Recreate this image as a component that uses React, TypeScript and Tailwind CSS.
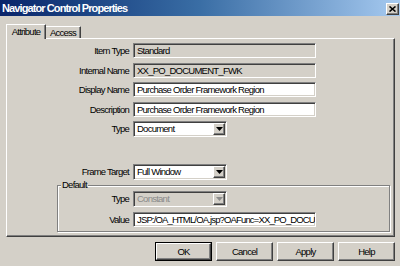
import React from 'react';

const FONT = "font-['Liberation_Sans',Arial,sans-serif]";

const sunken = 'border-t border-l border-t-[#808080] border-l-[#808080] border-r border-b border-r-white border-b-white shadow-[inset_1px_1px_0_#404040,inset_-1px_-1px_0_#d4d0c8]';
const raised = 'border-t border-l border-t-white border-l-white border-r border-b border-r-[#404040] border-b-[#404040] shadow-[inset_-1px_-1px_0_#808080]';

function TextField({ value, disabled, tight }: { value: string; disabled?: boolean; tight?: boolean }) {
  return (
    <div className={`w-[183px] h-[15px] ${sunken} ${disabled ? 'bg-[#d4d0c8]' : 'bg-white'} flex items-center pl-[3px] overflow-hidden whitespace-nowrap leading-none ${tight ? 'tracking-[-0.85px]' : ''}`}>
      {value}
    </div>
  );
}

function Combo({ value, disabled }: { value: string; disabled?: boolean }) {
  return (
    <div className={`w-[94px] h-[16px] ${sunken} ${disabled ? 'bg-[#d4d0c8] text-[#8a8a8a]' : 'bg-white'} flex items-stretch p-[1px]`}>
      <div className="flex-1 flex items-center pl-[2px] leading-none whitespace-nowrap overflow-hidden">{value}</div>
      <div className={`w-[12px] bg-[#d4d0c8] ${raised} flex items-center justify-center`}>
        <svg width="7" height="4" viewBox="0 0 7 4">
          <path d="M0 0h7L3.5 4z" fill={disabled ? '#8a8a8a' : '#000'} />
        </svg>
      </div>
    </div>
  );
}

function Row({ label, labelWidth, className = '', children }: { label: string; labelWidth: string; className?: string; children: React.ReactNode }) {
  return (
    <div className={`flex items-center gap-[4px] ${className}`}>
      <div className={`${labelWidth} text-right leading-none whitespace-nowrap`}>{label}</div>
      {children}
    </div>
  );
}

function Button({ label, isDefault }: { label: string; isDefault?: boolean }) {
  return (
    <div className={`w-[57px] h-[19px] ${isDefault ? 'border border-black' : ''}`}>
      <div className={`w-full h-full bg-[#d4d0c8] ${raised} flex items-center justify-center leading-none`}>{label}</div>
    </div>
  );
}

export default function App() {
  return (
    <div className={`w-[400px] h-[266px] bg-[#d4d0c8] ${FONT} text-[9.5px] tracking-[-0.75px] text-black overflow-hidden flex flex-col`}>
      {/* title bar */}
      <div className="h-[16px] shrink-0 flex items-center pl-[2px] pr-[1px] bg-gradient-to-r from-[#0a246a] via-[#3a6ea5] to-[#a6caf0]">
        <span className="text-white font-bold text-[11px] tracking-[-0.9px] leading-none">Navigator Control Properties</span>
        <div className={`ml-auto mt-[2px] w-[13px] h-[12px] bg-[#d4d0c8] ${raised} flex items-center justify-center`}>
          <svg width="7" height="6" viewBox="0 0 7 6">
            <path d="M0.5 0.5L6.5 5.5M6.5 0.5L0.5 5.5" stroke="#000" strokeWidth="1.6" />
          </svg>
        </div>
      </div>

      {/* tabs */}
      <div className="flex items-end pl-[6px] pt-[7px] h-[22px] shrink-0">
        <div className="relative z-10 w-[40px] h-[15px] -mb-[1px] bg-[#d4d0c8] border-t border-l border-t-white border-l-white border-r border-r-[#404040] shadow-[inset_-1px_0_0_#808080] flex items-start justify-center pt-[2px] leading-none">
          Attribute
        </div>
        <div className="w-[35px] h-[12px] bg-[#d4d0c8] border-t border-t-white border-r border-r-[#404040] shadow-[inset_-1px_0_0_#808080] flex items-start justify-center pt-[1px] leading-none">
          Access
        </div>
      </div>

      {/* tab panel */}
      <div className={`ml-[6px] w-[389px] h-[199px] shrink-0 ${raised} flex flex-col`}>
        <Row label="Item Type" labelWidth="w-[122px]" className="mt-[4px]">
          <TextField value="Standard" disabled />
        </Row>
        <Row label="Internal Name" labelWidth="w-[122px]" className="mt-[5px]">
          <TextField value="XX_PO_DOCUMENT_FWK" disabled />
        </Row>
        <Row label="Display Name" labelWidth="w-[122px]" className="mt-[4px]">
          <TextField value="Purchase Order Framework Region" />
        </Row>
        <Row label="Description" labelWidth="w-[122px]" className="mt-[5px]">
          <TextField value="Purchase Order Framework Region" />
        </Row>
        <Row label="Type" labelWidth="w-[122px]" className="mt-[4px]">
          <Combo value="Document" />
        </Row>
        <Row label="Frame Target" labelWidth="w-[122px]" className="mt-[27px]">
          <Combo value="Full Window" />
        </Row>

        {/* Default group */}
        <div className="relative ml-[50px] mt-[5px] w-[333px] h-[47px] border border-[#808080] shadow-[1px_1px_0_#fff,inset_1px_1px_0_#fff] flex flex-col">
          <span className="absolute -top-[6px] left-[3px] px-[1px] bg-[#d4d0c8] leading-none">Default</span>
          <Row label="Type" labelWidth="w-[71px]" className="mt-[5px]">
            <Combo value="Constant" disabled />
          </Row>
          <Row label="Value" labelWidth="w-[71px]" className="mt-[5px]">
            <TextField value="JSP:/OA_HTML/OA.jsp?OAFunc=XX_PO_DOCU" tight />
          </Row>
        </div>
      </div>

      {/* buttons */}
      <div className="flex justify-end gap-[4px] pr-[5px] mt-[5px]">
        <Button label="OK" isDefault />
        <Button label="Cancel" />
        <Button label="Apply" />
        <Button label="Help" />
      </div>
    </div>
  );
}
